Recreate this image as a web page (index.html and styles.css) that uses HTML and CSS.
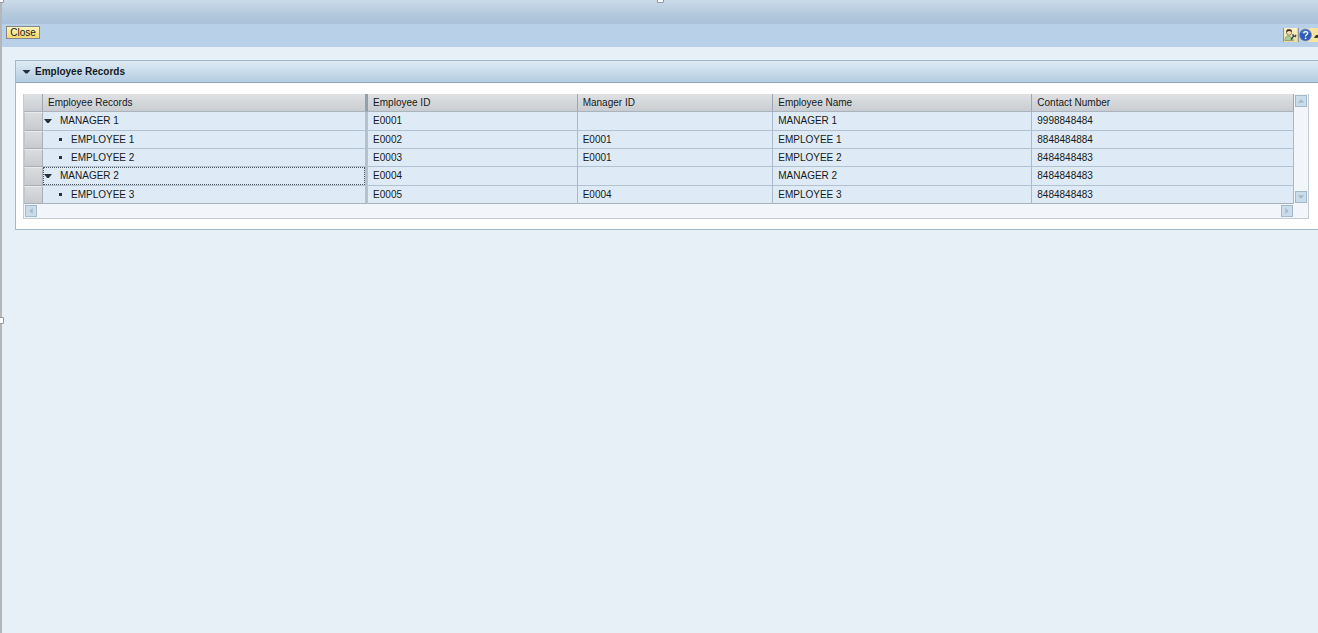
FILE: index.html
```html
<!DOCTYPE html>
<html lang="en">
<head>
<meta charset="utf-8">
<title>Employee Records</title>
<link rel="stylesheet" href="styles.css">
</head>
<body>
<div class="page">
  <header class="titlebar"></header>
  <div class="toolbar">
    <button class="close" type="button">Close</button>
    <div class="tools">
      <button class="tool" type="button" aria-label="Personalize">
        <svg viewBox="0 0 14 14"><path d="M1 13c0-4 2-5 4-5l4 2 1 3z" fill="#a9cf98" stroke="#6d8660" stroke-width=".7"/><circle cx="5.5" cy="4.500" r="2.700" fill="#f6dfb4" stroke="#6b5030" stroke-width=".7"/><path d="M2.500 4.500C2 1 4 .7 6 .8s3 1.400 2.400 3L6.500 2.600 4 3z" fill="#3d3024"/><path d="M7.500 12l3-4M9.500 6l.5 2 2 .5 1-1.500" fill="none" stroke="#3e444a" stroke-width="1.500"/></svg>
      </button>
      <button class="tool help" type="button" aria-label="Help">
        <svg viewBox="0 0 14 14"><circle cx="6.500" cy="7" r="6" fill="#2f5cb8" stroke="#7990b8" stroke-width=".6"/><path d="M2 5a5 5 0 0 1 9 0z" fill="#6e98dc" opacity=".7"/><path d="M4.800 5.400c0-2.500 3.800-2.400 3.800-.2C8.600 6.800 6.600 6.900 6.600 8.400" fill="none" stroke="#fff" stroke-width="1.300"/><circle cx="6.600" cy="10.300" r=".9" fill="#fff"/></svg>
      </button>
      <button class="tool more" type="button" aria-label="More">
        <svg viewBox="0 0 5 14"><path d="M1 10l2-3h2v3z" fill="#333a40"/></svg>
      </button>
    </div>
  </div>
  <main class="panel">
    <h1 class="panel-head"><button type="button" class="panel-toggle"><span class="arrow"></span>Employee Records</button></h1>
    <div class="panel-body">
      <div class="grid">
        <table class="records">
          <colgroup><col class="c-sel"><col class="c-tree"><col class="c-id"><col class="c-mgr"><col class="c-name"><col></colgroup>
          <thead>
            <tr><th></th><th class="tree">Employee Records</th><th>Employee ID</th><th>Manager ID</th><th>Employee Name</th><th>Contact Number</th></tr>
          </thead>
          <tbody>
            <tr class="root"><td class="sel"></td><td class="tree"><span class="node"><span class="arrow"></span>MANAGER 1</span></td><td>E0001</td><td></td><td>MANAGER 1</td><td>9998848484</td></tr>
            <tr><td class="sel"></td><td class="tree"><span class="node leaf"><span class="dot"></span>EMPLOYEE 1</span></td><td>E0002</td><td>E0001</td><td>EMPLOYEE 1</td><td>8848484884</td></tr>
            <tr><td class="sel"></td><td class="tree"><span class="node leaf"><span class="dot"></span>EMPLOYEE 2</span></td><td>E0003</td><td>E0001</td><td>EMPLOYEE 2</td><td>8484848483</td></tr>
            <tr class="root"><td class="sel"></td><td class="tree"><span class="node focused"><span class="arrow"></span>MANAGER 2</span></td><td>E0004</td><td></td><td>MANAGER 2</td><td>8484848483</td></tr>
            <tr><td class="sel"></td><td class="tree"><span class="node leaf"><span class="dot"></span>EMPLOYEE 3</span></td><td>E0005</td><td>E0004</td><td>EMPLOYEE 3</td><td>8484848483</td></tr>
          </tbody>
        </table>
        <div class="vscroll">
          <button type="button" class="sb" aria-label="Scroll up"><svg viewBox="0 0 12 12"><path d="M2 8l4-4 4 4z"/></svg></button>
          <button type="button" class="sb" aria-label="Scroll down"><svg viewBox="0 0 12 12"><path d="M2 4l4 4 4-4z"/></svg></button>
        </div>
        <div class="hscroll">
          <button type="button" class="sb" aria-label="Scroll left"><svg viewBox="0 0 12 12"><path d="M8 2L4 6l4 4z"/></svg></button>
          <button type="button" class="sb" aria-label="Scroll right"><svg viewBox="0 0 12 12"><path d="M4 2l4 4-4 4z"/></svg></button>
        </div>
      </div>
    </div>
  </main>
  <span class="handle corner"></span><span class="handle top"></span><span class="handle side"></span>
</div>
</body>
</html>
```
FILE: styles.css
```css
* { box-sizing: border-box; }
body { margin: 0; background: #e8f0f7; color: #151a20; font: 10px/14px "Liberation Sans", Arial, sans-serif; }
button { margin: 0; padding: 0; font: inherit; color: inherit; border: 0; background: none; }
svg { display: block; width: 100%; height: 100%; }
.page { position: relative; min-height: 100vh; border-left: 2px solid #b4b7ba; overflow: hidden; }

.titlebar { height: 24px; background: linear-gradient(#cbdce9, #b4cadd 55%, #a9c1da); }
.toolbar { display: flex; justify-content: space-between; height: 23px; padding-left: 4px; background: #b9d1e8; }
.close { width: 34px; height: 13px; margin-top: 2px; line-height: 11px; border: 1px solid #85878a; background: linear-gradient(#fff5bd, #f3d76f); }
.tools { display: flex; gap: 1px; padding-top: 4px; }
.tool { width: 14px; height: 14px; background: linear-gradient(#fbf3d0, #efdc96); border-left: 1px solid #8b97a3; }
.tool.help { width: 15px; background: linear-gradient(90deg, #b9d1e8, #f6e8a8); }
.tool.more { width: 5px; margin-left: -1px; border: 0; background: #f8e492; }

.panel { margin: 13px 0 0 13px; border: solid #a3b8ca; border-width: 1px 0 1px 1px; background: #fff; }
.panel-head { margin: 0; height: 22px; border-bottom: 1px solid #8faabf; background: linear-gradient(#dfebf4, #b3cde2); font-size: 10px; }
.panel-toggle { display: flex; align-items: center; gap: 4px; height: 21px; padding-left: 6px; font-weight: bold; }
.arrow { width: 8px; height: 4px; background: #27313c; clip-path: polygon(0 0, 100% 0, 60% 100%, 40% 100%); }
.panel-toggle .arrow { width: 9px; }
.panel-body { padding: 11px 9px 10px 7px; }

.grid { display: grid; grid-template-columns: minmax(0, 1fr) 14px; border: solid #c3ccd4; border-width: 0 1px 1px; background: #f2f6fa; }
.records { width: 100%; table-layout: fixed; border-collapse: separate; border-spacing: 0; }
.c-sel { width: 19px; }
.c-tree { width: 25.600%; }
.c-id { width: 16.500%; }
.c-mgr { width: 15.400%; }
.c-name { width: 20.400%; }
th, td { padding: 0 0 0 5px; text-align: left; font-weight: normal; white-space: nowrap; border-right: 1px solid #a9b9c8; border-bottom: 1px solid #b1c1cf; }
th { height: 18px; border-bottom-color: #aab4bd; border-right-color: #9da8b2; background: linear-gradient(#dfe1e3, #c9cdd1); }
td { height: 18px; background: #deebf6; }
.root td { height: 19px; }
tbody tr:last-child td { border-bottom-color: #a4b2be; }
.records .tree { border-right: 3px solid #b3c2cf; }
.records th.tree { border-right-color: #929fac; }
.records .sel { border: 1px solid #a9afb5; border-top-color: #e9ebed; border-left-color: #c0c5ca; background: linear-gradient(#d9dcdf, #c7cbcf); }
td.tree { padding-left: 0; }
.node { display: flex; align-items: center; gap: 8px; height: 17px; padding-left: 1px; }
.root .node { height: 18px; }
.focused { outline: 1px dotted #4b5661; outline-offset: -1px; }
.leaf { gap: 9px; padding-left: 15px; }
.dot { width: 3px; height: 3px; margin-left: 1px; background: #27313c; }

.vscroll { display: flex; flex-direction: column; justify-content: space-between; align-items: center; padding: 1px 0; }
.hscroll { display: flex; justify-content: space-between; grid-column: 1 / -1; padding: 1px 15px 1px 1px; }
.sb { width: 12px; height: 12px; border: 1px solid #a3b8c9; background: #c9ddeb; }
.sb path { fill: #a7bac8; }

.handle { position: absolute; width: 7px; height: 7px; border: 1px solid #94989c; border-radius: 1px; background: #fff; }
.corner { left: -5px; top: -4px; }
.top { left: 50%; top: -4px; margin-left: -3px; }
.side { left: -5px; top: 50%; }

.page { overflow: visible; }
```
